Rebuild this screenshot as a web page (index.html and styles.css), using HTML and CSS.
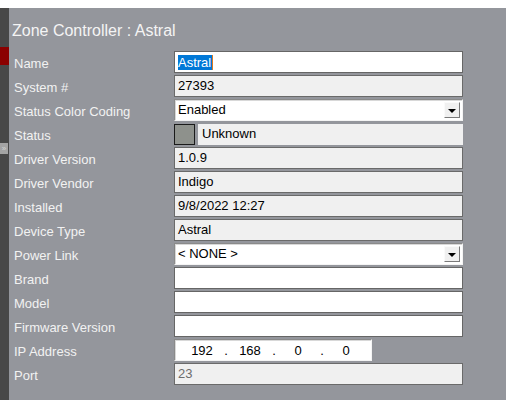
FILE: index.html
```html
<!DOCTYPE html>
<html>
<head>
<meta charset="utf-8">
<link rel="stylesheet" href="styles.css">
</head>
<body>
<div class="topbar"></div>
<div class="frame">
  <div class="rail">
    <div class="rail-mark"></div>
    <div class="rail-tab">&#187;</div>
  </div>
  <div class="main">
    <div class="title">Zone Controller : Astral</div>
    <div class="form">
      <div class="label">Name</div>
      <div class="field edit"><span class="sel">Astral</span><span class="caret"></span></div>

      <div class="label">System #</div>
      <div class="field ro">27393</div>

      <div class="label">Status Color Coding</div>
      <div class="field combo"><span class="combo-text">Enabled</span><span class="combo-btn"><span class="tri"></span></span></div>

      <div class="label">Status</div>
      <div class="status"><span class="swatch"></span><span class="status-text">Unknown</span></div>

      <div class="label">Driver Version</div>
      <div class="field ro">1.0.9</div>

      <div class="label">Driver Vendor</div>
      <div class="field ro">Indigo</div>

      <div class="label">Installed</div>
      <div class="field ro">9/8/2022 12:27</div>

      <div class="label">Device Type</div>
      <div class="field ro">Astral</div>

      <div class="label">Power Link</div>
      <div class="field combo"><span class="combo-text">&lt; NONE &gt;</span><span class="combo-btn"><span class="tri"></span></span></div>

      <div class="label">Brand</div>
      <div class="field edit"></div>

      <div class="label">Model</div>
      <div class="field edit"></div>

      <div class="label">Firmware Version</div>
      <div class="field edit"></div>

      <div class="label">IP Address</div>
      <div class="ip"><span class="oct">192</span><span class="dot">.</span><span class="oct">168</span><span class="dot">.</span><span class="oct">0</span><span class="dot">.</span><span class="oct">0</span></div>

      <div class="label">Port</div>
      <div class="field ro dim">23</div>
    </div>
  </div>
</div>
</body>
</html>
```
FILE: styles.css
```css
html, body {
  margin: 0;
  padding: 0;
  background: #ffffff;
  font-family: "Liberation Sans", Arial, sans-serif;
}
.topbar {
  height: 8px;
  background: #ffffff;
}
.frame {
  display: flex;
  height: 392px;
  background: #94969c;
}
.rail {
  width: 9px;
  background: #484848;
  display: flex;
  flex-direction: column;
}
.rail-mark {
  margin-top: 39px;
  height: 18px;
  background: #8b0000;
}
.rail-tab {
  margin-top: 78px;
  height: 11px;
  width: 8px;
  background: #a4a4a4;
  color: #d4d4d4;
  font-size: 8px;
  line-height: 11px;
  text-align: center;
  overflow: hidden;
}
.main {
  flex: 1;
  padding-left: 3px;
}
.title {
  margin-top: 13px;
  height: 20px;
  line-height: 20px;
  font-size: 16px;
  color: #f4f4f4;
}
.form {
  margin-top: 10px;
  padding-left: 2px;
  display: grid;
  grid-template-columns: 160px 289px;
  grid-auto-rows: 22px;
  row-gap: 2px;
}
.label {
  font-size: 13px;
  line-height: 22px;
  padding-top: 2px;
  box-sizing: border-box;
  color: #f2f2f2;
  white-space: nowrap;
}
.field {
  box-sizing: border-box;
  height: 22px;
  font-size: 13px;
  line-height: 20px;
  color: #000;
  padding-left: 3px;
  white-space: nowrap;
  overflow: hidden;
}
.edit {
  background: #ffffff;
  border: 1px solid #666666;
  display: flex;
  align-items: center;
}
.ro {
  background: #f0f0f0;
  border: 1px solid #6a6a6a;
}
.dim {
  color: #6d6d6d;
}
.sel {
  background: #0078d7;
  color: #ffffff;
  line-height: 15px;
  padding: 0 1px 0 0;
}
.caret {
  width: 1px;
  height: 15px;
  background: #e07a1f;
}
.combo {
  background: #ffffff;
  border-top: 1px solid #8a8a8a;
  border-left: 1px solid #8a8a8a;
  border-right: 1px solid #f4f4f4;
  border-bottom: 1px solid #f4f4f4;
  box-shadow: inset 1px 1px 0 #d8d8d8;
  display: flex;
  align-items: center;
  padding-left: 3px;
  padding-right: 2px;
}
.combo-text {
  flex: 1;
}
.combo-btn {
  box-sizing: border-box;
  width: 16px;
  height: 16px;
  background: #f0f0f0;
  border-top: 1px solid #fafafa;
  border-left: 1px solid #fafafa;
  border-right: 1px solid #7a7a7a;
  border-bottom: 1px solid #7a7a7a;
  display: flex;
  align-items: center;
  justify-content: center;
}
.tri {
  width: 0;
  height: 0;
  border-left: 4px solid transparent;
  border-right: 4px solid transparent;
  border-top: 4px solid #000;
  margin-top: 1px;
}
.status {
  display: flex;
  align-items: center;
  gap: 3px;
}
.swatch {
  box-sizing: border-box;
  width: 21px;
  height: 21px;
  background: #8e918c;
  border: 1px solid #1a1a1a;
}
.status-text {
  flex: 1;
  height: 21px;
  background: #f0f0f0;
  font-size: 13px;
  line-height: 19px;
  padding-left: 4px;
  color: #000;
}
.ip {
  box-sizing: border-box;
  width: 198px;
  height: 22px;
  background: #ffffff;
  border-top: 1px solid #8a8a8a;
  border-left: 1px solid #8a8a8a;
  border-right: 1px solid #f4f4f4;
  border-bottom: 1px solid #f4f4f4;
  box-shadow: inset 1px 1px 0 #d8d8d8;
  display: flex;
  align-items: center;
  padding-left: 10px;
  font-size: 13px;
  color: #000;
}
.oct {
  width: 34px;
  text-align: center;
}
.dot {
  width: 14px;
  text-align: center;
}
```
